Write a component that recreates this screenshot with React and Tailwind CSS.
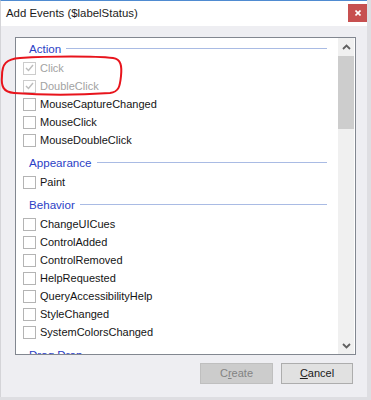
import React from "react";

const GROUPS = [
  {
    title: "Action",
    first: true,
    items: [
      { name: "Click", disabled: true },
      { name: "DoubleClick", disabled: true },
      { name: "MouseCaptureChanged" },
      { name: "MouseClick" },
      { name: "MouseDoubleClick" },
    ],
  },
  { title: "Appearance", items: [{ name: "Paint" }] },
  {
    title: "Behavior",
    items: [
      { name: "ChangeUICues" },
      { name: "ControlAdded" },
      { name: "ControlRemoved" },
      { name: "HelpRequested" },
      { name: "QueryAccessibilityHelp" },
      { name: "StyleChanged" },
      { name: "SystemColorsChanged" },
    ],
  },
  { title: "Drag Drop", items: [] },
];

function CheckBox({ disabled }) {
  return (
    <div
      className={`w-[13px] h-[13px] shrink-0 border bg-white flex items-center justify-center ${
        disabled ? "border-[#cccccc]" : "border-[#b4b4b4]"
      }`}
    >
      {disabled && (
        <svg width="9" height="8" viewBox="0 0 9 8">
          <path d="M1 4 L3.5 6.5 L8 1" fill="none" stroke="#bcbcbc" strokeWidth="1.4" />
        </svg>
      )}
    </div>
  );
}

function Header({ title, first }) {
  return (
    <div
      className={`flex items-start shrink-0 pl-[13px] pr-[11px] ${
        first ? "h-[21px] pt-[2px]" : "h-[24px] pt-[5px]"
      }`}
    >
      <div className="flex items-center w-full h-[18px]">
        <span className="text-[11.6px] text-[#2b3ec6] leading-[18px]">{title}</span>
        <div className="flex-1 h-px bg-[#a9bbe4] ml-[5px] -translate-y-[1px]" />
      </div>
    </div>
  );
}

function Row({ name, disabled }) {
  return (
    <div className="h-[18px] shrink-0 flex items-center pl-[7px] gap-[4px]">
      <CheckBox disabled={disabled} />
      <span className={`text-[11px] leading-[18px] ${disabled ? "text-[#a2a2a2]" : "text-[#141414]"}`}>
        {name}
      </span>
    </div>
  );
}

function Chevron({ down }) {
  return (
    <svg width="9" height="6" viewBox="0 0 9 6">
      <path
        d={down ? "M1 1 L4.5 4.5 L8 1" : "M1 5 L4.5 1.5 L8 5"}
        fill="none"
        stroke="#606060"
        strokeWidth="1.8"
      />
    </svg>
  );
}

export default function App() {
  return (
    <div
      className="w-[371px] h-[400px] bg-[#dedee2] relative overflow-hidden"
      style={{ fontFamily: '"Liberation Sans", Arial, sans-serif' }}
    >
      <div className="w-[367px] h-[397px] flex flex-col border-t border-[#4f8bd1] border-l border-l-[#d4d4d8]">
        {/* title bar */}
        <div className="h-[25px] bg-white flex items-center justify-between pl-[5px] shrink-0">
          <span className="text-[11.4px] text-[#1b1b1b]">Add Events ($labelStatus)</span>
          <div className="w-[19px] h-[18px] bg-[#c75050] flex items-center justify-center mt-[-1px]">
            <svg width="6" height="6" viewBox="0 0 6 6">
              <path d="M0.5 0.5 L5.5 5.5 M5.5 0.5 L0.5 5.5" stroke="white" strokeWidth="1.6" />
            </svg>
          </div>
        </div>

        {/* body */}
        <div className="flex-1 bg-[#eeeef2] pt-[11px] pl-[14px] pr-[13px] flex flex-col">
          <div className="w-[341px] h-[318px] border border-[#828790] bg-white flex">
            <div className="flex-1 overflow-hidden flex flex-col">
              {GROUPS.map((g) => (
                <React.Fragment key={g.title}>
                  <Header title={g.title} first={g.first} />
                  {g.items.map((it) => (
                    <Row key={it.name} {...it} />
                  ))}
                </React.Fragment>
              ))}
            </div>
            {/* scrollbar */}
            <div className="w-[16px] bg-[#f0f0f0] flex flex-col mr-[1px]">
              <div className="h-[18px] flex items-center justify-center">
                <Chevron />
              </div>
              <div className="h-[73px] bg-[#cdcdcd]" />
              <div className="flex-1" />
              <div className="h-[17px] flex items-center justify-center">
                <Chevron down />
              </div>
            </div>
          </div>

          {/* buttons */}
          <div className="flex justify-end gap-[8px] mt-[8px] pr-[1px]">
            <div className="w-[73px] h-[21px] bg-[#cccccc] border border-[#bfbfbf] flex items-center justify-center text-[11px] text-[#838383]">
              C<span className="underline">r</span>eate
            </div>
            <div className="w-[72px] h-[21px] bg-[#e1e1e1] border border-[#adadad] flex items-center justify-center text-[11px] text-[#1a1a1a]">
              <span className="underline">C</span>ancel
            </div>
          </div>
        </div>
      </div>

      {/* red annotation */}
      <svg className="absolute left-0 top-0 pointer-events-none" width="371" height="400">
        <path
          d="M20 58 C50 56 95 56 113 58 C121 59 122 66 121 76 C120 86 119 92 110 93 C80 95 40 95 14 93 C3 92 1 86 2 76 C2 64 6 59 20 58 Z"
          fill="none"
          stroke="#e8141c"
          strokeWidth="2"
        />
      </svg>
    </div>
  );
}
